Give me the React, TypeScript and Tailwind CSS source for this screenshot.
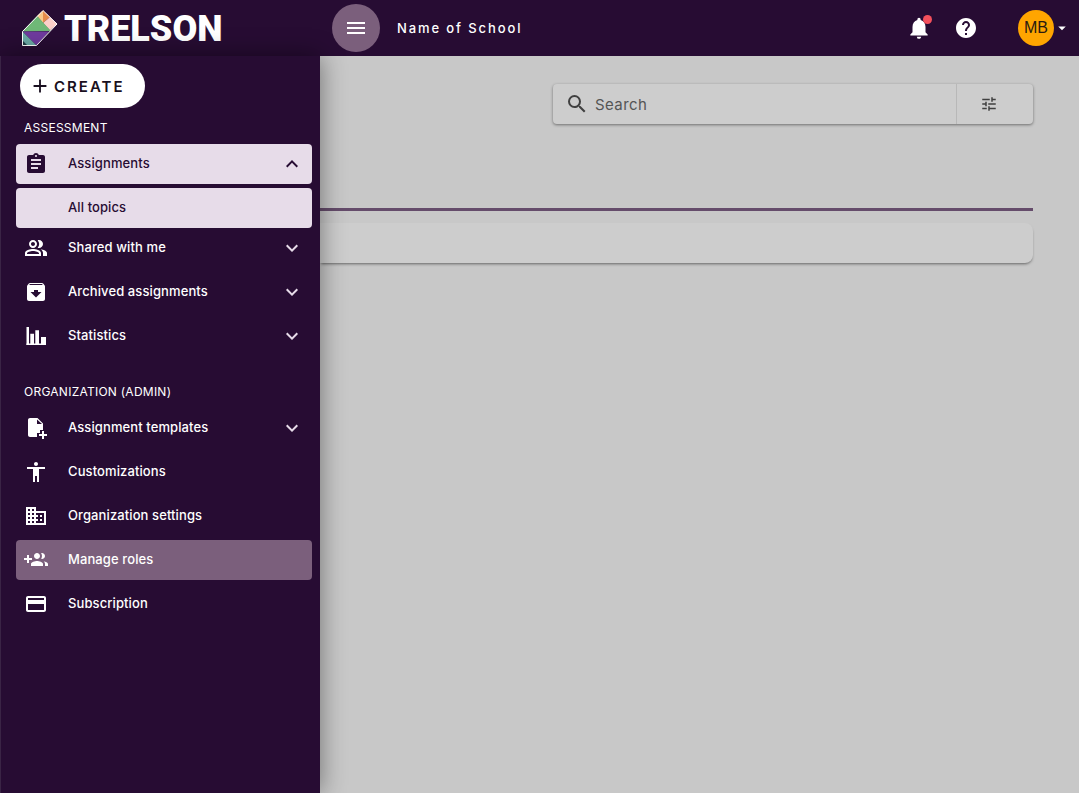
import { ReactNode } from "react";
import {
    MdAccessibility,
    MdAdd,
    MdArchive,
    MdArrowDropDown,
    MdAssignment,
    MdCreditCard,
    MdDomain,
    MdExpandLess,
    MdExpandMore,
    MdHelp,
    MdMenu,
    MdNotifications,
    MdOutlinePeopleAlt,
    MdSearch,
    MdTune,
} from "react-icons/md";

function Logo() {
    return (
        <svg width="38" height="38" viewBox="20 9 38 38" className="shrink-0">
            <polygon points="37,16 43,10.5 43,23" fill="#f8c98a" />
            <polygon points="43,10.5 50,17 43,23" fill="#e58c4b" />
            <polygon points="50,17 57,24 50,30.5 43,23" fill="#fccfc8" />
            <polygon points="22.5,31.5 37,16 51,31" fill="#6fb877" />
            <polygon points="22.5,31.5 49,31.5 36.5,45.5" fill="#6f3a9e" />
            <polygon points="22.5,31.5 36.5,45.5 22.5,45.5" fill="#6aa9a5" />
            <polygon points="22.5,40.5 27.5,45.5 22.5,45.5" fill="#1f3a44" />
            <polygon
                points="22.5,31.5 43,10.5 57,24 36.5,45.5 22.5,45.5"
                fill="none"
                stroke="#ffffff"
                strokeWidth="1"
            />
        </svg>
    );
}

function BarsIcon() {
    return (
        <svg width="24" height="24" viewBox="0 0 24 24" fill="currentColor">
            <path d="M2.500 3H5v18H2.500zM6.300 9.700H10V21H6.300zM11.300 6.300H15V21h-3.700zM17 13h5v8h-5z" />
            <path d="M2.500 19.500H22V21H2.500z" />
        </svg>
    );
}

function TemplateIcon() {
    return (
        <svg width="24" height="24" viewBox="0 0 24 24" fill="currentColor">
            <path d="M6 2h7.500l5.500 5.500V14h-3v3h-3v4H6c-1.100 0-2-.9-2-2V4c0-1.100.9-2 2-2zm7 1.500V8h5z" fillRule="evenodd" />
            <path d="M18 15h2v3h3v2h-3v3h-2v-3h-3v-2h3z" />
        </svg>
    );
}

function GroupAddIcon() {
    return (
        <svg width="24" height="24" viewBox="0 0 24 24" fill="currentColor">
            <path d="M8 10H5V7H3v3H0v2h3v3h2v-3h3v-2zm10 1c1.660 0 2.990-1.340 2.990-3S19.660 5 18 5c-.32 0-.63.05-.91.14.57.81.9 1.790.9 2.860s-.34 2.040-.9 2.860c.28.09.59.14.91.14zm-5 0c1.660 0 2.990-1.340 2.990-3S14.660 5 13 5s-3 1.340-3 3 1.340 3 3 3zm6.620 2.160c.83.73 1.380 1.660 1.380 2.840v2h3v-2c0-1.540-2.370-2.490-4.380-2.840zM13 13c-2 0-6 1-6 3v2h12v-2c0-2-4-3-6-3z" />
        </svg>
    );
}

interface NavRowProps {
    icon?: ReactNode;
    label: string;
    chevron?: "up" | "down";
    variant?: "default" | "open" | "active";
    className?: string;
}

function NavRow({ icon, label, chevron, variant = "default", className = "" }: NavRowProps) {
    const colors =
        variant === "open"
            ? "bg-[#e7dce9] text-[#270c33]"
            : variant === "active"
              ? "bg-[#7b5f7c] text-white"
              : "text-white";

    return (
        <div className={`flex h-10 w-[296px] items-center rounded ${colors} ${className}`}>
            <div className="flex w-10 shrink-0 items-center justify-center text-2xl">{icon}</div>
            <span className="mb-px ml-3 text-[13px] leading-none font-medium tracking-[0.1px]">{label}</span>
            {chevron === "up" && <MdExpandLess className="mr-2 ml-auto text-2xl" />}
            {chevron === "down" && <MdExpandMore className="mr-2 ml-auto text-2xl text-[#e7dce9]" />}
        </div>
    );
}

export default function App() {
    return (
        <div className="flex h-[793px] w-[1079px] flex-col overflow-hidden bg-[#c8c8c8] font-['Inter',sans-serif]">
            {/* Top bar */}
            <header className="flex h-14 shrink-0 items-center bg-[#270c33] text-white">
                <div className="flex w-[332px] items-center gap-[6px] pl-[20px]">
                    <Logo />
                    <span className="mt-px font-['Roboto',sans-serif] text-[36px] leading-none font-black">TRELSON</span>
                </div>
                <button className="flex h-12 w-12 items-center justify-center rounded-full bg-[#7b5f7c]">
                    <MdMenu className="text-[24px]" />
                </button>
                <span className="mt-px ml-[17px] text-[13px] font-medium tracking-[1.9px]">Name of School</span>
                <div className="ml-auto flex items-center">
                    <div className="relative">
                        <MdNotifications className="text-[26px]" />
                        <span className="absolute top-0 right-0 h-[9px] w-[9px] rounded-full bg-[#f4505c]" />
                    </div>
                    <MdHelp className="ml-[22px] text-[24px]" />
                    <div className="ml-[40px] flex h-9 w-9 items-center justify-center rounded-full bg-[#ffa500] font-['Liberation_Sans',sans-serif] text-base text-[#2a1a10]">
                        MB
                    </div>
                    <MdArrowDropDown className="mr-2 ml-[-1px] text-[18px]" />
                </div>
            </header>

            <div className="flex min-h-0 flex-1">
                {/* Sidebar */}
                <aside className="z-10 w-80 shrink-0 border-l border-[#3a2445] bg-[#270c33] pt-2 pl-[15px] shadow-[0_0_24px_rgba(0,0,0,0.45)]">
                    <button className="ml-[4px] flex h-11 w-[125px] items-center rounded-full bg-white pl-[9px] text-[#1a1020]">
                        <MdAdd className="text-[22px]" />
                        <span className="mt-px ml-[3px] text-[15px] leading-none font-semibold tracking-[2px]">CREATE</span>
                    </button>

                    <div className="mt-[12px] ml-[8px] h-4 text-xs leading-4 tracking-[0.25px] text-white">ASSESSMENT</div>
                    <NavRow icon={<MdAssignment />} label="Assignments" chevron="up" variant="open" className="mt-2" />
                    <NavRow label="All topics" variant="open" className="mt-1" />
                    <NavRow icon={<MdOutlinePeopleAlt />} label="Shared with me" chevron="down" />
                    <NavRow icon={<MdArchive />} label="Archived assignments" chevron="down" className="mt-1" />
                    <NavRow icon={<BarsIcon />} label="Statistics" chevron="down" className="mt-1" />

                    <div className="mt-7 ml-[8px] h-4 text-xs leading-4 tracking-[0.25px] text-white">ORGANIZATION (ADMIN)</div>
                    <NavRow icon={<TemplateIcon />} label="Assignment templates" chevron="down" className="mt-2" />
                    <NavRow icon={<MdAccessibility />} label="Customizations" className="mt-1" />
                    <NavRow icon={<MdDomain />} label="Organization settings" className="mt-1" />
                    <NavRow icon={<GroupAddIcon />} label="Manage roles" variant="active" className="mt-1" />
                    <NavRow icon={<MdCreditCard />} label="Subscription" className="mt-1" />
                </aside>

                {/* Dimmed content */}
                <main className="flex-1 pt-7 pr-[46px]">
                    <div className="ml-auto flex h-10 w-[480px] items-center rounded bg-[#cdcdcd] shadow-[0_1px_3px_rgba(0,0,0,0.45)]">
                        <MdSearch className="ml-[12px] text-[24px] text-[#404040]" />
                        <span className="mt-[2px] ml-[6px] flex-1 text-[15px] tracking-[0.4px] text-[#555555]">Search</span>
                        <div className="flex h-full w-[77px] items-center justify-center border-l border-[#b8b8b8] pr-3">
                            <MdTune className="text-[18px] text-[#404040]" />
                        </div>
                    </div>
                    <div className="mt-[84px] h-[3px] bg-[#654c6b]" />
                    <div className="mt-3 h-10 rounded-r-lg bg-[#cdcdcd] shadow-[0_2px_3px_-1px_rgba(0,0,0,0.5)]" />
                </main>
            </div>
        </div>
    );
}
